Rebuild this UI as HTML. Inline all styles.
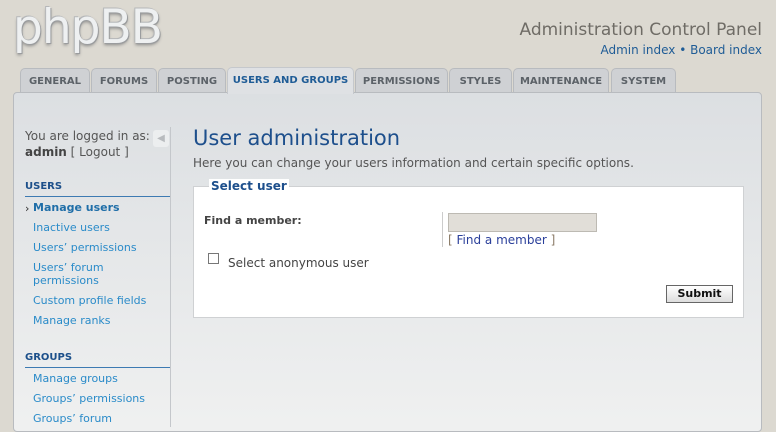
<!DOCTYPE html>
<html><head><style>
body{margin:0;width:776px;height:422px;background:#dcd9d1;font-family:"DejaVu Sans","Liberation Sans",sans-serif;position:relative;overflow:hidden}
.a{position:absolute;white-space:nowrap}
.tab{position:absolute;top:68px;height:24px;background:#cfd1d4;border:1px solid #b8bbbf;border-bottom:none;border-radius:5px 5px 0 0;font-size:10px;font-weight:bold;color:#5c6268;text-align:center;line-height:25px;box-sizing:border-box;white-space:nowrap;overflow:hidden}
.tab.on{top:67px;height:27px;background:#dfe1e4;color:#1f5c96;z-index:3;border-color:#c5c8cc}
#panel{position:absolute;left:13px;top:92px;width:749px;height:340px;background:linear-gradient(#dcdfe2,#eff0f0 330px);border:1px solid #b8bbbf;border-radius:4px;box-sizing:border-box}
.nav{font-size:11px;color:#2a8bc9}
.hd{font-size:10px;font-weight:bold;color:#1c4f8a}
</style></head><body>
<div class="a" style="left:13px;top:0px;font-size:47px;color:#eef0f1;letter-spacing:-1px;text-shadow:1px 1px 0 #9a9c9e,-1px -1px 0 #b5b7b9,0 2px 3px #888">phpBB</div>
<div class="a" style="right:14px;top:20px;font-size:17px;color:#6f6c66">Administration Control Panel</div>
<div class="a" style="right:14px;top:43px;font-size:12px;color:#1f5c96">Admin index • Board index</div>
<div class="tab" style="left:20px;width:70px">GENERAL</div>
<div class="tab" style="left:91px;width:66px">FORUMS</div>
<div class="tab" style="left:158px;width:68px">POSTING</div>
<div class="tab on" style="left:227px;width:127px">USERS AND GROUPS</div>
<div class="tab" style="left:355px;width:93px">PERMISSIONS</div>
<div class="tab" style="left:449px;width:63px">STYLES</div>
<div class="tab" style="left:513px;width:96px">MAINTENANCE</div>
<div class="tab" style="left:611px;width:65px">SYSTEM</div>
<div id="panel"></div>
<div class="a" style="left:170px;top:127px;width:1px;height:300px;background:#c4c7cb"></div>
<div class="a" style="left:153px;top:130px;width:16px;height:17px;background:#eceeef;border-radius:3px;color:#b8bbbe;font-size:10px;line-height:17px;text-align:center">◀</div>
<div class="a" style="left:25px;top:129px;font-size:12px;color:#555">You are logged in as:</div>
<div class="a" style="left:25px;top:145px;font-size:12px;color:#555"><b style="color:#444">admin</b> [ Logout ]</div>
<div class="a hd" style="left:25px;top:181px">USERS</div>
<div class="a" style="left:25px;top:196px;width:145px;height:1px;background:#3d7ab2"></div>
<div class="a" style="left:25px;top:202px;font-size:11px;color:#333">›</div>
<div class="a nav" style="left:33px;top:201px;font-weight:bold;color:#1f6ea8">Manage users</div>
<div class="a nav" style="left:33px;top:221px">Inactive users</div>
<div class="a nav" style="left:33px;top:241px">Users’ permissions</div>
<div class="a nav" style="left:33px;top:261px;line-height:13px">Users’ forum<br>permissions</div>
<div class="a nav" style="left:33px;top:294px">Custom profile fields</div>
<div class="a nav" style="left:33px;top:314px">Manage ranks</div>
<div class="a hd" style="left:25px;top:352px">GROUPS</div>
<div class="a" style="left:25px;top:367px;width:145px;height:1px;background:#3d7ab2"></div>
<div class="a nav" style="left:33px;top:372px">Manage groups</div>
<div class="a nav" style="left:33px;top:392px">Groups’ permissions</div>
<div class="a nav" style="left:33px;top:412px">Groups’ forum</div>
<div class="a" style="left:193px;top:126px;font-size:21px;color:#1d4f8c">User administration</div>
<div class="a" style="left:193px;top:156px;font-size:12px;color:#555">Here you can change your users information and certain specific options.</div>
<div class="a" style="left:193px;top:186px;width:551px;height:132px;background:#fff;border:1px solid #cfd1d3;box-sizing:border-box"></div>
<div class="a" style="left:209px;top:179px;background:#fff;padding:0 2px;font-size:12px;font-weight:bold;color:#1d4f8c">Select user</div>
<div class="a" style="left:204px;top:214px;font-size:11px;font-weight:bold;color:#444">Find a member:</div>
<div class="a" style="left:442px;top:212px;width:1px;height:35px;background:#ccc"></div>
<div class="a" style="left:448px;top:213px;width:149px;height:19px;background:#e1ded8;border:1px solid #bdbab3;box-sizing:border-box"></div>
<div class="a" style="left:448px;top:233px;font-size:12px;color:#2a3f9a"><span style="color:#8a7a66">[</span> Find a member <span style="color:#8a7a66">]</span></div>
<div class="a" style="left:208px;top:253px;width:11px;height:11px;border:1px solid #777;box-sizing:border-box;background:#fff"></div>
<div class="a" style="left:228px;top:256px;font-size:12px;color:#444">Select anonymous user</div>
<div class="a" style="left:666px;top:285px;width:67px;height:18px;border:1px solid #666;box-sizing:border-box;background:linear-gradient(#fff,#ddd);font-size:11px;font-weight:bold;color:#111;text-align:center;line-height:16px">Submit</div>
</body></html>
